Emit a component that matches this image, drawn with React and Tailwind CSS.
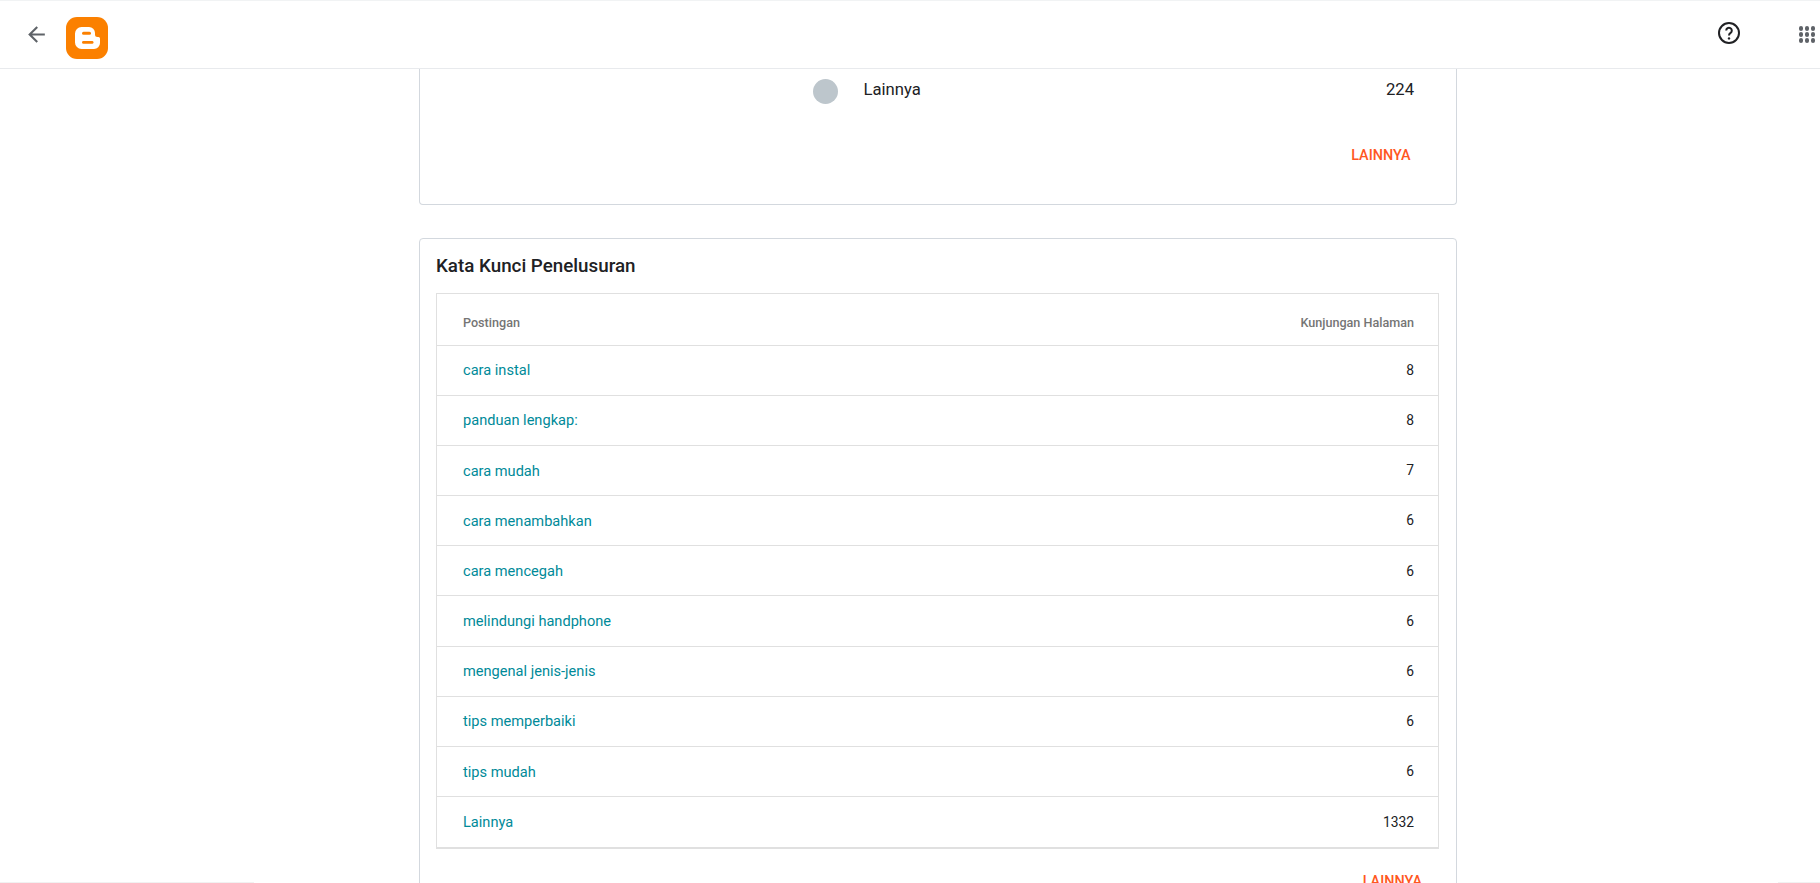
const rows = [
  ["cara instal", "8"],
  ["panduan lengkap:", "8"],
  ["cara mudah", "7"],
  ["cara menambahkan", "6"],
  ["cara mencegah", "6"],
  ["melindungi handphone", "6"],
  ["mengenal jenis-jenis", "6"],
  ["tips memperbaiki", "6"],
  ["tips mudah", "6"],
  ["Lainnya", "1332"],
];

export default function App() {
  return (
    <div className="relative h-[883px] w-full overflow-hidden bg-white font-['Roboto',sans-serif] text-[#202124]">
      <header className="flex h-[69px] items-center border-t border-b border-t-[#f1f3f4] border-b-[#e8eaed] bg-white">
        <button className="ml-[24px] flex h-[25px] w-[25px] items-center justify-center">
          <svg width="25" height="25" viewBox="0 0 24 24" fill="#5f6368">
            <path d="M20 11H7.83l5.59-5.59L12 4l-8 8 8 8 1.41-1.41L7.83 13H20v-2z" />
          </svg>
        </button>
        <svg className="ml-[17px] mt-[6px]" width="42" height="42" viewBox="0 0 42 42">
          <rect width="42" height="42" rx="11" fill="#fb8000" />
          <path
            fill="#fff"
            d="M15.5 10H23a6 6 0 0 1 6 6v1.5a2.5 2.5 0 0 0 2.5 2.5h1a1.5 1.5 0 0 1 1.5 1.5V26a6 6 0 0 1-6 6H15.5A6.5 6.5 0 0 1 9 25.5v-9a6.5 6.5 0 0 1 6.5-6.5z"
          />
          <rect x="16" y="14.8" width="9" height="3" rx="1.5" fill="#fb8000" />
          <rect x="16" y="24" width="11.5" height="2.8" rx="1.4" fill="#fb8000" />
        </svg>
        <div className="flex-1" />
        <svg className="mb-[3px] mr-[57.5px]" width="24" height="24" viewBox="0 0 24 24" fill="none">
          <circle cx="12" cy="12" r="10" stroke="#202124" strokeWidth="2" />
          <path d="M9.2 9.6a2.8 2.8 0 1 1 4.4 2.3c-1 .7-1.6 1.2-1.6 2.6" stroke="#202124" strokeWidth="2" />
          <circle cx="12" cy="17.4" r="1.2" fill="#202124" />
        </svg>
        <div className="mr-[5px] grid grid-cols-3 gap-[1.5px]">
          {Array.from({ length: 9 }).map((_, i) => (
            <span key={i} className="h-[4.5px] w-[4.5px] rounded-full bg-[#5f6368]" />
          ))}
        </div>
      </header>

      <main className="ml-[419px] w-[1038px]">
        <section className="h-[136px] rounded-b border border-t-0 border-[#d3d8de] bg-white">
          <div className="flex h-[42px] items-center">
            <span className="ml-[393px] mt-[3px] h-[25px] w-[25px] rounded-full bg-[#bdc6cc]" />
            <span className="ml-[25.5px] mb-[1px] text-[16.67px]">Lainnya</span>
            <span className="ml-auto mb-[1px] mr-[42px] text-[16.67px]">224</span>
          </div>
          <div className="mt-[35px] flex justify-end pr-[45.5px]">
            <a className="text-[14.4px] font-medium leading-5 text-[#ff5722]">LAINNYA</a>
          </div>
        </section>

        <section className="mt-[33px] rounded-t border border-[#d3d8de] bg-white pb-[40px] pl-[16px] pr-[17px]">
          <h2 className="flex h-[54px] items-center text-[18.8px] font-medium text-[#202124]">Kata Kunci Penelusuran</h2>
          <div className="border border-b-2 border-[#e0e0e0]">
            <div className="flex h-[51.5px] items-center justify-between border-b border-[#e0e0e0] pl-[26px] pr-[24px] pt-[8px] text-[12.6px] font-medium text-[#757575]">
              <span>Postingan</span>
              <span>Kunjungan Halaman</span>
            </div>
            {rows.map(([k, v], i) => (
              <div
                key={k}
                className={`flex h-[50.2px] items-center justify-between pl-[26px] pr-[24px] pt-[2px] text-[14.6px] ${i < rows.length - 1 ? "border-b border-[#e0e0e0]" : ""}`}
              >
                <a className="text-[#008a99]">{k}</a>
                <span className="mb-[2px] text-[13.8px] text-[#202124]">{v}</span>
              </div>
            ))}
          </div>
          <div className="mt-[23px] flex justify-end pr-[17px]">
            <a className="text-[14.4px] font-medium leading-5 text-[#ff5722]">LAINNYA</a>
          </div>
        </section>
      </main>

      <div className="absolute bottom-0 left-0 h-px w-[254px] bg-[#f1f1f1]" />
      <div className="absolute bottom-0 right-0 h-px w-[42px] bg-[#f1f1f1]" />
    </div>
  );
}
